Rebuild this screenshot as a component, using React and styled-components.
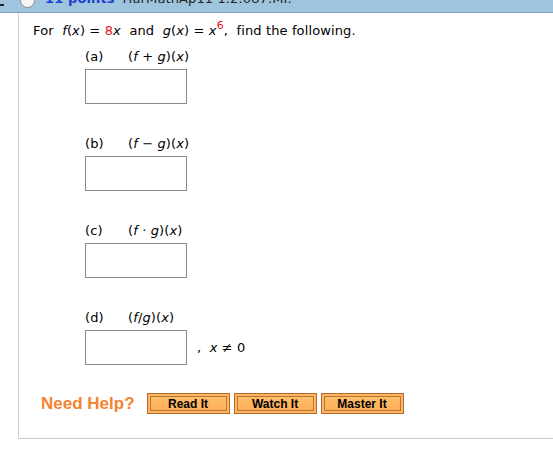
import React from "react";
import styled, { createGlobalStyle } from "styled-components";

const GlobalStyle = createGlobalStyle`
  html, body {
    margin: 0;
    padding: 0;
    background: #ffffff;
  }
  body {
    font-family: "DejaVu Sans", Verdana, sans-serif;
    letter-spacing: 0.12px;
    color: #000;
  }
`;

const Header = styled.div`
  height: 12px;
  background: #9fc4dd;
  border-bottom: 1px solid #7b9fbb;
  overflow: hidden;
  position: relative;
`;

const HeaderInner = styled.div`
  display: flex;
  align-items: center;
  margin-top: -11px;
  padding-left: 20px;
  font-size: 13px;
  line-height: 16px;
  white-space: nowrap;
`;

const Dash = styled.span`
  position: absolute;
  left: 0;
  top: 4px;
  width: 4px;
  height: 2px;
  background: #222;
`;

const CheckIcon = styled.span`
  width: 15px;
  height: 15px;
  border-radius: 50%;
  background: #f4f4f4;
  border: 1px solid #8c8c8c;
  box-sizing: border-box;
  margin: 4px 10px 0 0;
`;

const Points = styled.span`
  color: #1d3fcf;
  font-weight: bold;
`;

const Code = styled.span`
  color: #222;
  margin-left: 8px;
`;

const Panel = styled.div`
  margin-left: 18px;
  height: 426px;
  box-sizing: border-box;
  border-left: 1px solid #cccccc;
  border-bottom: 1px solid #cccccc;
  padding: 10px 0 0 14px;
`;

const Intro = styled.p`
  margin: 0;
  font-size: 13px;
  line-height: 16px;
  white-space: nowrap;
`;

const Var = styled.i`
  font-style: italic;
`;

const Red = styled.span`
  color: #e8111a;
`;

const Sup = styled.sup`
  color: #e8111a;
  font-size: 11px;
  line-height: 0;
  vertical-align: 6px;
`;

const Parts = styled.div`
  display: flex;
  flex-direction: column;
  gap: 32px;
  margin: 10px 0 0 52px;
`;

const Part = styled.div`
  display: flex;
  flex-direction: column;
  gap: 4px;
`;

const LabelRow = styled.div`
  display: flex;
  font-size: 13px;
  line-height: 16px;
`;

const Letter = styled.span`
  width: 43px;
`;

const AnswerRow = styled.div`
  display: flex;
  align-items: center;
  gap: 10px;
  font-size: 13px;
`;

const AnswerBox = styled.input`
  width: 102px;
  height: 35px;
  box-sizing: border-box;
  border: 1px solid #8a8a8a;
  margin: 0;
  padding: 0 4px;
  background: #fff;
  outline: none;
`;

const HelpRow = styled.div`
  display: flex;
  align-items: center;
  margin: 28px 0 0 8px;
`;

const HelpTitle = styled.span`
  font-family: "Liberation Sans", Arial, sans-serif;
  font-weight: bold;
  font-size: 17px;
  letter-spacing: 0;
  color: #f38331;
  margin-right: 12px;
`;

const Buttons = styled.div`
  display: flex;
  gap: 4px;
`;

const HelpButton = styled.button`
  width: 83px;
  height: 21px;
  padding: 0;
  border: 1px solid #b2682f;
  background: linear-gradient(#ffc070, #ffad52);
  box-shadow: inset 0 0 0 2px #ffb860, inset 0 0 0 3px #b97437;
  font-family: "Liberation Sans", Arial, sans-serif;
  font-weight: bold;
  font-size: 12px;
  letter-spacing: 0;
  color: #000;
  cursor: pointer;
`;

const parts = [
  { letter: "(a)", op: "+" },
  { letter: "(b)", op: "\u2212" },
  { letter: "(c)", op: "\u00b7" },
  { letter: "(d)", op: "/" },
];

const Expr = ({ op }) =>
  op === "/" ? (
    <span>
      (<Var>f</Var>/<Var>g</Var>)(<Var>x</Var>)
    </span>
  ) : (
    <span>
      (<Var>f</Var> {op} <Var>g</Var>)(<Var>x</Var>)
    </span>
  );

export default function App() {
  return (
    <>
      <GlobalStyle />
      <Header>
        <Dash />
        <HeaderInner>
          <CheckIcon />
          <Points>11 points</Points>
          <Code>HarMathAp11 1.2.087.MI.</Code>
        </HeaderInner>
      </Header>
      <Panel>
        <Intro>
          For&nbsp; <Var>f</Var>(<Var>x</Var>) = <Red>8</Red>
          <Var>x</Var>&nbsp; and&nbsp; <Var>g</Var>(<Var>x</Var>) = <Var>x</Var>
          <Sup>6</Sup>,&nbsp; find the following.
        </Intro>
        <Parts>
          {parts.map((p) => (
            <Part key={p.letter}>
              <LabelRow>
                <Letter>{p.letter}</Letter>
                <Expr op={p.op} />
              </LabelRow>
              <AnswerRow>
                <AnswerBox type="text" />
                {p.op === "/" && (
                  <span>
                    ,&nbsp; <Var>x</Var> &ne; 0
                  </span>
                )}
              </AnswerRow>
            </Part>
          ))}
        </Parts>
        <HelpRow>
          <HelpTitle>Need Help?</HelpTitle>
          <Buttons>
            <HelpButton>Read It</HelpButton>
            <HelpButton>Watch It</HelpButton>
            <HelpButton>Master It</HelpButton>
          </Buttons>
        </HelpRow>
      </Panel>
    </>
  );
}
